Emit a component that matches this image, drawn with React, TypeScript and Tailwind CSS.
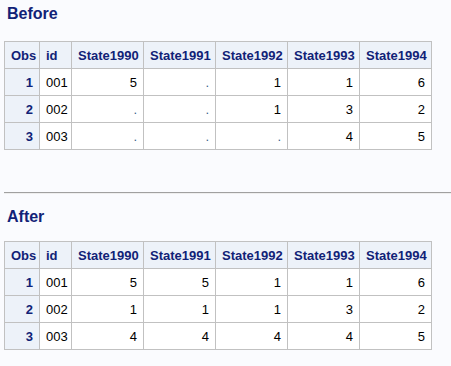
const COLS = ["State1990", "State1991", "State1992", "State1993", "State1994"];

type Row = { obs: number; id: string; vals: (number | null)[] };

const BEFORE: Row[] = [
  { obs: 1, id: "001", vals: [5, null, 1, 1, 6] },
  { obs: 2, id: "002", vals: [null, null, 1, 3, 2] },
  { obs: 3, id: "003", vals: [null, null, null, 4, 5] },
];

const AFTER: Row[] = [
  { obs: 1, id: "001", vals: [5, 5, 1, 1, 6] },
  { obs: 2, id: "002", vals: [1, 1, 1, 3, 2] },
  { obs: 3, id: "003", vals: [4, 4, 4, 4, 5] },
];

const cell = "border border-[#c1c1c1] h-[27px] px-[6px] py-0 whitespace-nowrap overflow-hidden";
const head = `${cell} bg-[#edf2f9] text-[#112277] font-bold text-left`;

function DataTable({ rows }: { rows: Row[] }) {
  return (
    <table className="table-fixed w-[428px] border-collapse ml-[4px] text-[13px] leading-[15px] border border-[#c1c1c1] bg-white">
      <colgroup>
        <col className="w-[35px]" />
        <col className="w-[32px]" />
        {COLS.map((c) => (
          <col key={c} className="w-[72px]" />
        ))}
      </colgroup>
      <thead>
        <tr>
          <th className={head}>Obs</th>
          <th className={head}>id</th>
          {COLS.map((c) => (
            <th key={c} className={head}>
              {c}
            </th>
          ))}
        </tr>
      </thead>
      <tbody>
        {rows.map((r) => (
          <tr key={r.obs}>
            <th className={`${cell} bg-[#edf2f9] text-[#112277] font-bold text-right`}>{r.obs}</th>
            <td className={`${cell} text-black`}>{r.id}</td>
            {r.vals.map((v, i) => (
              <td key={i} className={`${cell} text-right ${v === null ? "text-[#3a5f8a]" : "text-black"}`}>
                {v === null ? "." : v}
              </td>
            ))}
          </tr>
        ))}
      </tbody>
    </table>
  );
}

export default function App() {
  return (
    <div
      className="w-[451px] h-[366px] bg-[#fafbfe] overflow-hidden"
      style={{ fontFamily: '"Liberation Sans", Arial, sans-serif' }}
    >
      <div className="pt-[5px] pl-[7px] text-[16px] leading-[18px] font-bold text-[#112277]">Before</div>
      <div className="mt-[18px]">
        <DataTable rows={BEFORE} />
      </div>
      <div className="mt-[42px] ml-[4px] border-t border-t-[#a0a0a0] border-b border-b-[#eeeeee]" />
      <div className="mt-[14px] pl-[7px] text-[16px] leading-[18px] font-bold text-[#112277]">After</div>
      <div className="mt-[15px]">
        <DataTable rows={AFTER} />
      </div>
    </div>
  );
}
